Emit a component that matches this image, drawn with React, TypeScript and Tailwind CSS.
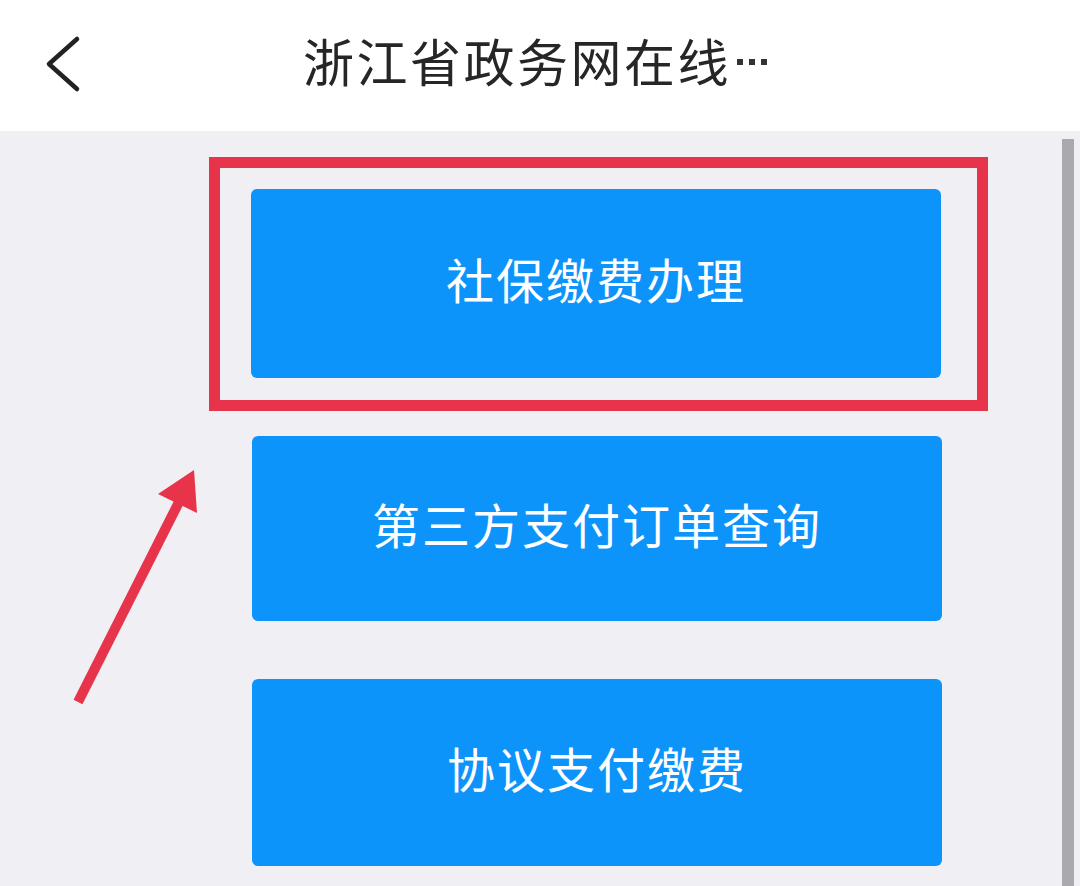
import React from "react";

const items = ["社保缴费办理", "第三方支付订单查询", "协议支付缴费"];

function ServiceButton({ label, h }: { label: string; h: string }) {
  return (
    <button
      className={`w-[690px] ${h} rounded-[6px] bg-[#0d94fb] text-white text-[48px] tracking-[2px] leading-none flex items-center justify-center pb-[12px]`}
    >
      {label}
    </button>
  );
}

export default function App() {
  return (
    <div
      className="w-[1080px] h-[886px] overflow-hidden flex flex-col bg-[#efeff4]"
      style={{ fontFamily: '"Noto Sans CJK SC", "Noto Sans", sans-serif' }}
    >
      {/* top bar */}
      <div className="h-[131px] shrink-0 bg-white relative flex items-center justify-center">
        <button className="absolute left-[40px] top-[34px] w-[44px] h-[60px] flex items-center justify-center">
          <svg width="40" height="60" viewBox="0 0 40 60" fill="none">
            <path d="M35 5 L7 30 L35 55" stroke="#222" strokeWidth="4.5" strokeLinecap="round" strokeLinejoin="round" />
          </svg>
        </button>
        <h1 className="text-[51px] leading-none text-[#262626] tracking-[2.5px] -mt-[10px] -ml-[10px] flex items-center">
          浙江省政务网在线
          <span className="flex gap-[6px] ml-[6px] mt-[2px]">
            <i className="w-[6px] h-[6px] bg-[#333]" />
            <i className="w-[6px] h-[6px] bg-[#333]" />
            <i className="w-[6px] h-[6px] bg-[#333]" />
          </span>
        </h1>
      </div>

      {/* content */}
      <div className="relative flex-1">
        <div className="ml-[209px] mt-[26px] w-[779px] flex flex-col">
          <div className="border-[11px] border-[#e8344a] pl-[31px] pr-[34px] pt-[21px] pb-[22px]">
            <ServiceButton label={items[0]} h="h-[189px]" />
          </div>
          <div className="ml-[43px] mt-[25px]">
            <ServiceButton label={items[1]} h="h-[185px]" />
          </div>
          <div className="ml-[43px] mt-[58px]">
            <ServiceButton label={items[2]} h="h-[187px]" />
          </div>
        </div>

        {/* annotation arrow */}
        <svg className="absolute left-0 top-0" width="260" height="755" viewBox="0 131 260 755">
          <line x1="78" y1="702" x2="180" y2="500" stroke="#e8344a" strokeWidth="10" />
          <polygon points="194,470 158,494 197,513" fill="#e8344a" />
        </svg>

        {/* scrollbar */}
        <div className="absolute left-[1062px] top-[8px] w-[12px] bottom-0 bg-[#a9a9ae]" />
      </div>
    </div>
  );
}
